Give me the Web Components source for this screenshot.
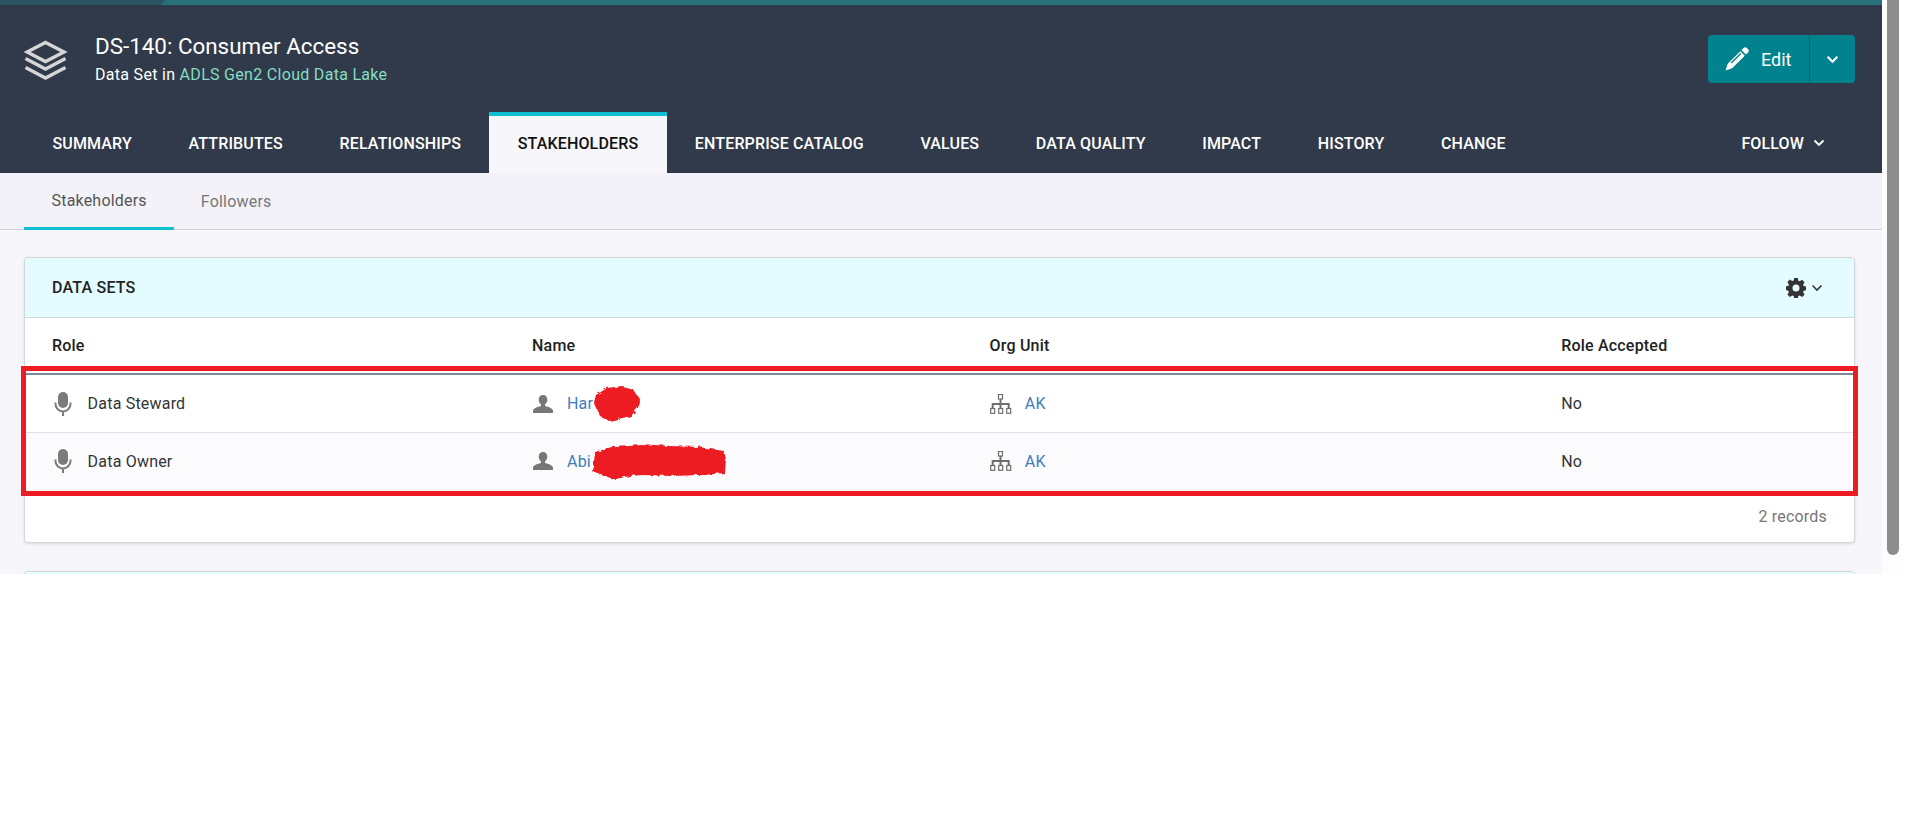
<!DOCTYPE html>
<html lang="en">
<head>
<meta charset="utf-8">
<title>DS-140: Consumer Access</title>
<style>
html, body { margin: 0; height: 100%; background: #fff; font-family: Roboto, "Liberation Sans", sans-serif; }
</style>
</head>
<body>
<asset-page>
    <asset-header title-text="DS-140: Consumer Access" kind="Data Set in" parent="ADLS Gen2 Cloud Data Lake"></asset-header>
    <asset-tabs></asset-tabs>
    <sub-tabs></sub-tabs>
    <page-content>
        <data-card heading="DATA SETS">
            <stake-table></stake-table>
        </data-card>
        <data-card stub></data-card>
    </page-content>
</asset-page>

<script>
const chevron = (w, h, color, sw) => `<svg width="${w}" height="${h}" viewBox="0 0 12 8"><path d="M1.5 1.5 6 6l4.5-4.5" fill="none" stroke="${color}" stroke-width="${sw}"/></svg>`;

const ICONS = {
    layers: `<svg width="44" height="40" viewBox="0 0 44 40" fill="none" stroke="#d6d6d6" stroke-width="3.4">
        <path d="M21.5 2.5 40 12 21.5 21.5 3 12z"/>
        <path d="M1.5 18.5 21.5 29 41.5 18.5"/>
        <path d="M1.5 27.5 21.5 38 41.5 27.5"/>
    </svg>`,
    pencil: `<svg width="24" height="24" viewBox="0 0 24 24"><path fill="#fff" fill-rule="evenodd" d="M18.600.9c.9-.9 2.300-.9 3.200 0l1.300 1.300c.9.9.9 2.300 0 3.200l-2.200 2.200-4.500-4.500zM15.300 4.200l4.500 4.500L7.200 21.300.5 23.500l2.200-6.700zM5.600 15.400l9.700-9.500 1 1-9.700 9.500z"/></svg>`,
    gear: `<svg width="20" height="20" viewBox="0 0 20 20"><path fill="#333" fill-rule="evenodd" d="M8.200 0h3.600l.5 2.700 1.500.6 2.300-1.500 2.500 2.500-1.500 2.300.6 1.500 2.700.5v3.600l-2.700.5-.6 1.500 1.500 2.300-2.500 2.500-2.300-1.500-1.500.6-.5 2.700H8.200l-.5-2.700-1.500-.6-2.300 1.500-2.500-2.500 1.500-2.300-.6-1.500L-.4 12V8.400l2.700-.5.6-1.500-1.500-2.300 2.500-2.500 2.300 1.500 1.500-.6zM10 6.500a3.500 3.500 0 1 0 0 7 3.500 3.500 0 0 0 0-7z"/></svg>`,
    mic: `<svg width="18" height="24" viewBox="0 0 18 24"><rect x="4" y="0" width="10" height="16" rx="5" fill="#7b7b7b"/><path d="M1.500 10.500v1.500a7.500 7.500 0 0 0 15 0v-1.500M9 19.500V24" fill="none" stroke="#7b7b7b" stroke-width="2"/></svg>`,
    person: `<svg width="20" height="18" viewBox="0 0 20 18"><path fill="#777" d="M10 0c2.700 0 4.300 2 4.300 4.700 0 2-1 3.800-2.300 4.700v1.600c3 .8 7.200 2 8 4.500V18H0v-2.500c.8-2.500 5-3.700 8-4.500V9.400C6.700 8.500 5.700 6.700 5.700 4.700 5.700 2 7.300 0 10 0z"/></svg>`,
    org: `<svg width="22" height="20" viewBox="0 0 22 20" fill="none" stroke="#6e6e6e"><rect x="8.500" y=".5" width="4" height="4.500" stroke-width="1.200"/><rect x=".7" y="14.500" width="4" height="4.800" stroke-width="1.200"/><rect x="8.700" y="14.500" width="4" height="4.800" stroke-width="1.200"/><rect x="16.700" y="14.500" width="4" height="4.800" stroke-width="1.200"/><path d="M10.500 5v9.500M2.700 14.500v-4.500h16v4.500" stroke-width="2"/></svg>`
};

class AssetPage extends HTMLElement {
    constructor() {
        super();
        this.attachShadow({ mode: 'open' });
        this.shadowRoot.innerHTML = `
            <style>
                :host { display: flex; height: 574px; }
                .main { width: 1882px; height: 574px; overflow: hidden; background: #f6f6fb; }
                .track { width: 20px; height: 574px; background: #fdfdfd; padding-left: 5px; box-sizing: border-box; }
                .thumb { width: 12px; height: 555px; background: #8d8d8d; border-radius: 0 0 6px 6px; }
            </style>
            <div class="main"><slot></slot></div>
            <div class="track"><div class="thumb"></div></div>
        `;
    }
}

class AssetHeader extends HTMLElement {
    constructor() {
        super();
        this.attachShadow({ mode: 'open' });
    }

    connectedCallback() {
        this.shadowRoot.innerHTML = `
            <style>
                :host { display: block; height: 112px; background: #303a4a; color: #fff; }
                .strip { height: 5px; background: #27727a; }
                .strip div { width: 165px; height: 5px; background: #2a5560; clip-path: polygon(0 0, 100% 0, 98% 100%, 0 100%); }
                .row { display: flex; align-items: flex-start; padding: 30px 27px 0 24px; }
                .icon { margin: 5px 27px 0 0; height: 40px; }
                .title { font-size: 22.400px; line-height: 28px; font-weight: 400; margin-top: -3px; }
                .sub { font-size: 16px; letter-spacing: .3px; line-height: 20px; margin-top: 5px; color: #fff; }
                .sub span { color: #86dcc4; }
                .text { flex: 1; }
                .btn { display: flex; height: 48px; border-radius: 4px; overflow: hidden; background: #00838f; }
                .edit { display: flex; align-items: center; width: 84px; padding-left: 17px; font-size: 18px; border-right: 1px solid #24505c; gap: 12px; }
                .drop { display: flex; align-items: center; justify-content: center; width: 45px; }
            </style>
            <div class="strip"><div></div></div>
            <div class="row">
                <div class="icon">${ICONS.layers}</div>
                <div class="text">
                    <div class="title">${this.getAttribute('title-text')}</div>
                    <div class="sub">${this.getAttribute('kind')} <span>${this.getAttribute('parent')}</span></div>
                </div>
                <div class="btn">
                    <div class="edit">${ICONS.pencil}<span>Edit</span></div>
                    <div class="drop">${chevron(13, 9, '#fff', 2)}</div>
                </div>
            </div>
        `;
    }
}

class AssetTabs extends HTMLElement {
    constructor() {
        super();
        this.attachShadow({ mode: 'open' });
        const tabs = ['Summary', 'Attributes', 'Relationships', 'Stakeholders', 'Enterprise Catalog', 'Values', 'Data Quality', 'Impact', 'History', 'Change'];
        this.shadowRoot.innerHTML = `
            <style>
                :host { display: flex; height: 61px; padding-left: 24.200px; background: #303a4a; color: #fff; font-size: 16px; letter-spacing: .15px; font-weight: 500; }
                .tab { display: flex; align-items: center; padding: 1px 28.300px 0; text-transform: uppercase; box-sizing: border-box; height: 61px; }
                .on { background: #f6f6fb; color: #111; border-top: 4px solid #0fc0d2; padding-top: 0; padding-bottom: 2px; }
                .follow { margin-left: auto; margin-right: 57px; display: flex; align-items: center; gap: 9px; padding-top: 1px; }
            </style>
            ${tabs.map(t => `<div class="tab ${t === 'Stakeholders' ? 'on' : ''}">${t}</div>`).join('')}
            <div class="follow">FOLLOW ${chevron(12, 8, '#fff', 1.800)}</div>
        `;
    }
}

class SubTabs extends HTMLElement {
    constructor() {
        super();
        this.attachShadow({ mode: 'open' });
        this.shadowRoot.innerHTML = `
            <style>
                :host { display: flex; height: 57px; padding-left: 24px; box-sizing: border-box; background: #f2f2f8; border-bottom: 1px solid #d4d4da; font-size: 16px; letter-spacing: .2px; color: #777; }
                div { display: flex; align-items: center; padding: 0 27.500px 0 26.500px; height: 57px; box-sizing: border-box; }
                .on { color: #555; padding: 0 27.500px; border-bottom: 3px solid #0fc0d2; }
            </style>
            <div class="on">Stakeholders</div>
            <div>Followers</div>
        `;
    }
}

class PageContent extends HTMLElement {
    constructor() {
        super();
        this.attachShadow({ mode: 'open' });
        this.shadowRoot.innerHTML = `
            <style>
                :host { display: block; padding: 27px 27px 0 24px; }
                .stack { display: flex; flex-direction: column; gap: 28px; }
            </style>
            <div class="stack"><slot></slot></div>
        `;
    }
}

class DataCard extends HTMLElement {
    constructor() {
        super();
        this.attachShadow({ mode: 'open' });
    }

    connectedCallback() {
        const stub = this.hasAttribute('stub');
        this.shadowRoot.innerHTML = `
            <style>
                :host { display: block; background: #fff; border: 1px solid #d2d6d9; border-radius: 4px; box-shadow: 0 1px 3px rgba(0,0,0,.12); }
                .head { display: flex; align-items: center; justify-content: space-between; height: 59px; padding: 0 31px 0 27px; background: #e4fcff; border-bottom: 1px solid #d2dadd; border-radius: 4px 4px 0 0; font-size: 16px; letter-spacing: .2px; font-weight: 500; color: #222; }
                .tools { display: flex; align-items: center; gap: 5px; }
                :host([stub]) .head { height: 10px; }
            </style>
            <div class="head">
                <span>${this.getAttribute('heading') || ''}</span>
                ${stub ? '' : `<span class="tools">${ICONS.gear}${chevron(12, 8, '#333', 1.600)}</span>`}
            </div>
            <slot></slot>
        `;
    }
}

class StakeTable extends HTMLElement {
    constructor() {
        super();
        this.attachShadow({ mode: 'open' });
        const rows = [
            { role: 'Data Steward', name: 'Har', blob: 'a' },
            { role: 'Data Owner', name: 'Abi', blob: 'b' }
        ];
        const blobs = {
            a: `<svg class="blob" style="width:48px;height:37px;top:10px" viewBox="0 0 48 37"><path filter="url(#rough)" fill="#ed1c24" d="M3 10 14 3l15-2 11 3 6 9-1 10-7 8-13 3-9 2-8-4-4-8-3-7z"/></svg>`,
            b: `<svg class="blob" style="width:135px;height:38px;top:9px" viewBox="0 0 135 38"><path filter="url(#rough)" fill="#ed1c24" d="M2 10 22 4l26-2 28 2 30 1 25 4 2 8-1 14-22 2-32 1-28-1-14 1-8 2-7 1-10-3-11-4z"/></svg>`
        };
        this.shadowRoot.innerHTML = `
            <style>
                :host { display: block; font-size: 16px; letter-spacing: .2px; color: #333; }
                .grid { display: grid; grid-template-columns: 480px 457.500px 571.700px 1fr; }
                .th { height: 55px; display: flex; align-items: center; padding-left: 27px; font-weight: 500; color: #222; }
                .list { position: relative; border-top: 2px solid #7a8b95; }
                .row { height: 57px; border-bottom: 1px solid #e2e2ea; }
                .row:nth-of-type(2) { background: #fbfbfd; border-bottom: 0; height: 58px; }
                .row:nth-of-type(2) .td { height: 56px; }
                .td { position: relative; display: flex; align-items: center; height: 100%; padding-left: 27px; gap: 13.300px; }
                .td svg { flex: none; }
                .role { gap: 15.600px; padding-left: 29px; }
                .name { padding-left: 28px; gap: 14px; }
                a { color: #3c7dbd; text-decoration: none; }
                .blob { position: absolute; left: 88px; overflow: visible; }
                .mark { position: absolute; left: -4px; right: -3.500px; top: -9px; bottom: -5px; border: 5px solid #ed1c24; pointer-events: none; }
                .foot { height: 51px; display: flex; align-items: center; justify-content: flex-end; padding-right: 27px; color: #777; }
            </style>
            <svg width="0" height="0" style="position:absolute">
                <filter id="rough" x="-10%" y="-15%" width="120%" height="130%">
                    <feTurbulence type="fractalNoise" baseFrequency=".18" numOctaves="2" seed="4"/>
                    <feDisplacementMap in="SourceGraphic" scale="5"/>
                    <feGaussianBlur stdDeviation=".6"/>
                </filter>
            </svg>
            <div class="grid">
                <div class="th">Role</div><div class="th">Name</div><div class="th">Org Unit</div><div class="th">Role Accepted</div>
            </div>
            <div class="list">
                ${rows.map(r => `
                    <div class="row grid">
                        <div class="td role">${ICONS.mic}<span>${r.role}</span></div>
                        <div class="td name">${ICONS.person}<a>${r.name}</a>${blobs[r.blob]}</div>
                        <div class="td">${ICONS.org}<a>AK</a></div>
                        <div class="td">No</div>
                    </div>
                `).join('')}
                <div class="mark"></div>
            </div>
            <div class="foot">2 records</div>
        `;
    }
}

customElements.define('asset-page', AssetPage);
customElements.define('asset-header', AssetHeader);
customElements.define('asset-tabs', AssetTabs);
customElements.define('sub-tabs', SubTabs);
customElements.define('page-content', PageContent);
customElements.define('data-card', DataCard);
customElements.define('stake-table', StakeTable);
</script>
</body>
</html>
